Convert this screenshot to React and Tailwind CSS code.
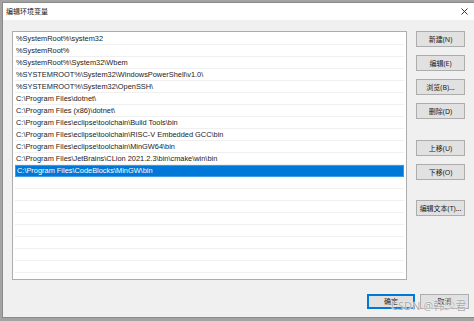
import React from "react";

const rows = [
  "%SystemRoot%\\system32",
  "%SystemRoot%",
  "%SystemRoot%\\System32\\Wbem",
  "%SYSTEMROOT%\\System32\\WindowsPowerShell\\v1.0\\",
  "%SYSTEMROOT%\\System32\\OpenSSH\\",
  "C:\\Program Files\\dotnet\\",
  "C:\\Program Files (x86)\\dotnet\\",
  "C:\\Program Files\\eclipse\\toolchain\\Build Tools\\bin",
  "C:\\Program Files\\eclipse\\toolchain\\RISC-V Embedded GCC\\bin",
  "C:\\Program Files\\eclipse\\toolchain\\MinGW64\\bin",
  "C:\\Program Files\\JetBrains\\CLion 2021.2.3\\bin\\cmake\\win\\bin",
  "C:\\Program Files\\CodeBlocks\\MinGW\\bin",
];

const font = { fontFamily: '"Noto Sans", "Noto Sans CJK SC", sans-serif' };
const rowFont = { fontFamily: '"Liberation Sans", "Noto Sans", sans-serif' };

function Btn({ children, className = "" }) {
  return (
    <div
      className={
        "w-[49px] h-[16px] bg-[#e1e1e1] border border-[#adadad] flex items-center justify-center text-[7px] text-[#222] leading-none " +
        className
      }
    >
      {children}
    </div>
  );
}

export default function App() {
  const empty = Array.from({ length: 9 });
  return (
    <div
      className="w-[474px] h-[321px] bg-[#a3a3a3] relative overflow-hidden pt-[2px] pl-[2px]"
      style={font}
    >
      <div className="w-[474px] h-[316px] bg-[#f0f0f0] border border-[#8a8a8a] flex flex-col">
        <div className="h-[17px] bg-white flex items-center justify-between pl-[3px] pr-[6px]">
          <span className="text-[7px] text-[#111] leading-none">编辑环境变量</span>
          <svg width="7" height="7" viewBox="0 0 7 7" className="mr-[1px]">
            <path d="M0.5 0.5 L6.5 6.5 M6.5 0.5 L0.5 6.5" stroke="#222" strokeWidth="0.9" />
          </svg>
        </div>
        <div className="flex-1 flex flex-col pt-[11px] pl-[9px]">
          <div className="flex">
            <div
              className="w-[395px] h-[249px] bg-white border border-[#adadad] pt-[1px] px-[2px] overflow-hidden"
              style={rowFont}
            >
              {rows.map((r, i) => {
                const sel = i === rows.length - 1;
                return (
                  <div
                    key={i}
                    className={
                      "h-[12px] flex items-center pl-[1px] text-[7.4px] leading-none whitespace-nowrap " +
                      (sel
                        ? "bg-[#0078d7] text-white border border-[#3c9ae6]"
                        : "text-[#1a1a1a] border-b border-[#f0f0f0]")
                    }
                  >
                    {r}
                  </div>
                );
              })}
              {empty.map((_, i) => (
                <div key={"e" + i} className="h-[12px] border-b border-[#f0f0f0]" />
              ))}
            </div>
            <div className="flex flex-col ml-[9px]">
              <Btn>新建(N)</Btn>
              <Btn className="mt-[8px]">编辑(E)</Btn>
              <Btn className="mt-[8px]">浏览(B)...</Btn>
              <Btn className="mt-[8px]">删除(D)</Btn>
              <Btn className="mt-[21px]">上移(U)</Btn>
              <Btn className="mt-[8px]">下移(O)</Btn>
              <Btn className="mt-[20px]">编辑文本(T)...</Btn>
            </div>
          </div>
          <div className="flex justify-end mt-[14px] pr-[6px] gap-[5px]">
            <div className="w-[48px] h-[15px] bg-[#e1e1e1] border-2 border-[#0078d7] flex items-center justify-center text-[7px] text-[#222] leading-none">
              确定
            </div>
            <div className="w-[49px] h-[15px] bg-[#e1e1e1] border border-[#adadad] flex items-center justify-center text-[7px] text-[#222] leading-none">
              取消
            </div>
          </div>
        </div>
      </div>
      <div
        className="absolute left-[391px] top-[300px] text-[11px] leading-none text-[#a9a9a9] whitespace-nowrap"
        style={{ textShadow: "0 0 1px #ffffff, 0 0 1px #ffffff" }}
      >
        CSDN @韩少君
      </div>
    </div>
  );
}
